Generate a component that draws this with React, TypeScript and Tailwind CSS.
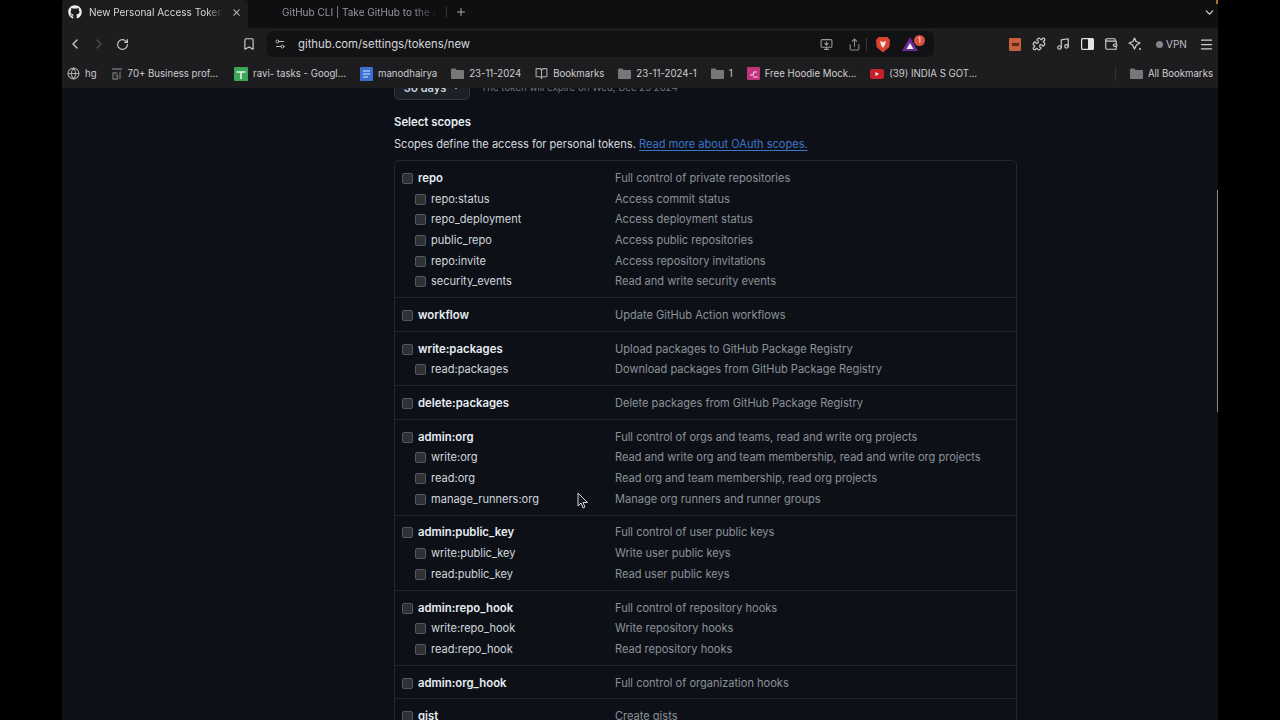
import { FaGithub } from 'react-icons/fa'
import {
  Bookmark,
  BookOpen,
  ChevronDown,
  ChevronLeft,
  ChevronRight,
  Globe,
  Menu,
  MonitorDown,
  Music,
  Plus,
  Puzzle,
  RotateCw,
  Settings2,
  Share,
  Wallet,
  X,
} from 'lucide-react'

type Scope = { name: string; desc: string }
type Group = { parent: Scope; children: Scope[] }

const groups: Group[] = [
  {
    parent: { name: 'repo', desc: 'Full control of private repositories' },
    children: [
      { name: 'repo:status', desc: 'Access commit status' },
      { name: 'repo_deployment', desc: 'Access deployment status' },
      { name: 'public_repo', desc: 'Access public repositories' },
      { name: 'repo:invite', desc: 'Access repository invitations' },
      { name: 'security_events', desc: 'Read and write security events' },
    ],
  },
  { parent: { name: 'workflow', desc: 'Update GitHub Action workflows' }, children: [] },
  {
    parent: { name: 'write:packages', desc: 'Upload packages to GitHub Package Registry' },
    children: [{ name: 'read:packages', desc: 'Download packages from GitHub Package Registry' }],
  },
  { parent: { name: 'delete:packages', desc: 'Delete packages from GitHub Package Registry' }, children: [] },
  {
    parent: { name: 'admin:org', desc: 'Full control of orgs and teams, read and write org projects' },
    children: [
      { name: 'write:org', desc: 'Read and write org and team membership, read and write org projects' },
      { name: 'read:org', desc: 'Read org and team membership, read org projects' },
      { name: 'manage_runners:org', desc: 'Manage org runners and runner groups' },
    ],
  },
  {
    parent: { name: 'admin:public_key', desc: 'Full control of user public keys' },
    children: [
      { name: 'write:public_key', desc: 'Write user public keys' },
      { name: 'read:public_key', desc: 'Read user public keys' },
    ],
  },
  {
    parent: { name: 'admin:repo_hook', desc: 'Full control of repository hooks' },
    children: [
      { name: 'write:repo_hook', desc: 'Write repository hooks' },
      { name: 'read:repo_hook', desc: 'Read repository hooks' },
    ],
  },
  { parent: { name: 'admin:org_hook', desc: 'Full control of organization hooks' }, children: [] },
  { parent: { name: 'gist', desc: 'Create gists' }, children: [] },
]

function Folder() {
  return (
    <svg width="13" height="11" viewBox="0 0 13 11" className="shrink-0">
      <path d="M0 1.5A1 1 0 0 1 1 .5h3.5l1 1.5H12a1 1 0 0 1 1 1v7a1 1 0 0 1-1 1H1a1 1 0 0 1-1-1z" fill="#77777a" />
    </svg>
  )
}

function Sheets() {
  return (
    <svg width="14" height="14" viewBox="0 0 14 14" className="shrink-0">
      <rect width="14" height="14" rx="1" fill="#3aa757" />
      <path d="M2.5 5h9M7 5v7" stroke="#e6f4ea" strokeWidth="1.6" />
    </svg>
  )
}

function Docs() {
  return (
    <svg width="13" height="14" viewBox="0 0 13 14" className="shrink-0">
      <rect width="13" height="14" rx="1" fill="#3b6fd4" />
      <path d="M3 4h7M3 7h7M3 10h5" stroke="#dfe8fa" strokeWidth="1.2" />
    </svg>
  )
}

function Hoodie() {
  return (
    <svg width="13" height="13" viewBox="0 0 13 13" className="shrink-0">
      <rect width="13" height="13" rx="1" fill="#c2337c" />
      <path d="M3 8h3l1-3h3M6 10h5" stroke="#f7d5e6" strokeWidth="1.2" fill="none" />
    </svg>
  )
}

function Youtube() {
  return (
    <svg width="14" height="10" viewBox="0 0 14 10" className="shrink-0">
      <rect width="14" height="10" rx="2" fill="#c8202a" />
      <path d="M5.5 3v4L9 5z" fill="#f3f3f3" />
    </svg>
  )
}

function GtLogo() {
  return (
    <svg width="12" height="12" viewBox="0 0 12 12" className="shrink-0" fill="none" stroke="#6f6f72" strokeWidth="1.3">
      <path d="M1 1h10M6.500 5H2v6h4.500V7.500H4.500M9 3.500V11" />
    </svg>
  )
}

function BraveShield() {
  return (
    <svg width="16" height="17" viewBox="0 0 16 17">
      <path d="M3.500 1h9L15 4l-.6 7L8 16.500 1.600 11 1 4z" fill="#d8442f" />
      <path d="M5 5l3 1 3-1-1 4-2 3-2-3z" fill="#f5e6df" />
    </svg>
  )
}

function Rewards() {
  return (
    <div className="relative w-[18px] h-[18px]">
      <svg width="16" height="14" viewBox="0 0 16 14" className="mt-[4px]">
        <path d="M8 0l8 14H0z" fill="#6b2a94" />
        <path d="M8 6l3.500 6h-7z" fill="#f2f2f2" />
      </svg>
      <div className="absolute top-[-2px] right-[-5px] w-[11px] h-[11px] rounded-full bg-[#d9503f] text-[7px] leading-[11px] text-center text-white">
        1
      </div>
    </div>
  )
}

function SidePanel() {
  return (
    <svg width="13" height="12" viewBox="0 0 13 12" className="ml-[11px] shrink-0">
      <rect x=".6" y=".6" width="11.800" height="10.800" rx="1" fill="none" stroke="#e4e4e6" strokeWidth="1.2" />
      <rect x="7" y="1" width="5" height="10" fill="#e4e4e6" />
    </svg>
  )
}

function StarDot() {
  return (
    <svg width="14" height="14" viewBox="0 0 14 14" className="ml-[10px] shrink-0" fill="none" stroke="#cfcfd2" strokeWidth="1.200">
      <path d="M6.500 1l1.500 3.500L12 6 8.500 8 6.500 12 4.500 8 1 6l4-1.500z" strokeLinejoin="round" />
      <circle cx="12" cy="12" r="1" fill="#cfcfd2" stroke="none" />
    </svg>
  )
}

function Bm({ icon, label }: { icon: React.ReactNode; label: string }) {
  return (
    <div className="flex items-center gap-[5px] shrink-0">
      {icon}
      <span className="whitespace-nowrap">{label}</span>
    </div>
  )
}

function Checkbox() {
  return <div className="mt-[2px] w-[11px] h-[11px] shrink-0 rounded-[2px] border border-[#54585f] bg-[#2d3035]" />
}

function ScopeRow({ scope, child }: { scope: Scope; child?: boolean }) {
  return (
    <div className="flex items-center h-[20.7px]">
      <div className={child ? 'w-[208px] pl-[20px] flex items-center gap-[5px]' : 'w-[208px] pl-[7px] flex items-center gap-[5px]'}>
        <Checkbox />
        <span className={child ? 'pt-px text-[#d2d7dd]' : 'pt-px text-[11.350px] font-semibold text-[#e6edf3]'}>{scope.name}</span>
      </div>
      <span className="ml-[12px] pt-px text-[#8b9299] whitespace-nowrap">{scope.desc}</span>
    </div>
  )
}

export default function App() {
  return (
    <div className="h-[720px] w-[1280px] overflow-hidden bg-black flex justify-center font-['Inter',sans-serif]">
      <div className="relative w-[1156px] h-full flex flex-col">
        {/* Tab strip */}
        <div className="h-[28px] shrink-0 bg-[#0f0f11] flex items-center text-[10px]">
          <div className="w-[186px] h-full bg-[#1c1c1e] flex items-center pl-[6px] pr-[6px] pb-[4px] rounded-t-[4px]">
            <FaGithub className="text-[#eeeeee] text-[14px] shrink-0" />
            <span className="ml-[7px] text-[#d6d6d8] whitespace-nowrap overflow-hidden w-[135px] [mask-image:linear-gradient(to_right,black_88%,transparent)]">
              New Personal Access Token | GitHub
            </span>
            <X size={11} strokeWidth={2.2} className="ml-[8px] text-[#d0d0d0] shrink-0" />
          </div>
          <div className="flex items-center flex-1 pb-[4px]">
            <span className="ml-[34px] text-[#97979b] whitespace-nowrap overflow-hidden w-[155px] [mask-image:linear-gradient(to_right,black_85%,transparent)]">
              GitHub CLI | Take GitHub to the command line
            </span>
            <div className="ml-[9px] w-px h-[12px] bg-[#333336]" />
            <Plus size={12} className="ml-[8px] text-[#a8a8ac]" />
            <ChevronDown size={13} className="ml-auto mr-[2px] text-[#e0e0e0]" />
          </div>
        </div>

        {/* Nav bar */}
        <div className="h-[32px] shrink-0 bg-[#1d1d1f] flex items-center text-[#cfcfd2]">
          <ChevronLeft size={16} className="ml-[5px] text-[#c8c8cb]" />
          <ChevronRight size={16} className="ml-[8px] text-[#4d4d50]" />
          <RotateCw size={13} className="ml-[9px]" />
          <Bookmark size={14} className="ml-[113px]" />
          <div className="ml-[11px] w-[667px] h-[26px] bg-[#121214] rounded-[6px] flex items-center">
            <Settings2 size={12} className="ml-[7px] text-[#b8b8bb]" />
            <span className="ml-[12px] text-[11.300px] text-[#d8d8da]">github.com/settings/tokens/new</span>
            <MonitorDown size={13} className="ml-auto text-[#9a9a9d]" />
            <Share size={13} className="ml-[15px] text-[#8e8e91]" />
            <div className="ml-[5px] w-px h-[13px] bg-[#39393c]" />
            <div className="ml-[8px]">
              <BraveShield />
            </div>
            <div className="ml-[11px] mr-[14px]">
              <Rewards />
            </div>
          </div>
          <div className="ml-[75px] w-[12px] h-[13px] rounded-[1px] bg-[#c4603a] flex items-center justify-center">
            <div className="w-[7px] h-[3px] bg-[#5d2a18]" />
          </div>
          <Puzzle size={14} className="ml-[11px]" />
          <Music size={14} className="ml-[10px]" />
          <SidePanel />
          <Wallet size={14} className="ml-[10px]" />
          <StarDot />
          <div className="ml-[14px] flex items-center gap-[3px] text-[10px] text-[#bdbdc0]">
            <div className="w-[7px] h-[7px] rounded-full bg-[#85858a]" />
            VPN
          </div>
          <Menu size={15} className="ml-[12px]" />
        </div>

        {/* Bookmarks bar */}
        <div className="h-[28px] shrink-0 bg-[#1d1d1f] flex items-center pl-[5px] gap-[14px] text-[9.650px] text-[#cdcdd0] relative z-10">
          <Bm icon={<Globe size={13} className="text-[#a9a9ac]" />} label="hg" />
          <Bm icon={<GtLogo />} label="70+ Business prof..." />
          <div className="ml-[2px]">
            <Bm icon={<Sheets />} label="ravi- tasks - Googl..." />
          </div>
          <Bm icon={<Docs />} label="manodhairya" />
          <Bm icon={<Folder />} label="23-11-2024" />
          <Bm icon={<BookOpen size={13} className="text-[#aaaaad]" />} label="Bookmarks" />
          <Bm icon={<Folder />} label="23-11-2024-1" />
          <Bm icon={<Folder />} label="1" />
          <Bm icon={<Hoodie />} label="Free Hoodie Mock..." />
          <Bm icon={<Youtube />} label="(39) INDIA S GOT..." />
          <div className="ml-auto w-px h-[14px] bg-[#333336]" />
          <div className="mr-[5px]">
            <Bm icon={<Folder />} label="All Bookmarks" />
          </div>
        </div>

        {/* Page */}
        <div className="flex-1 min-h-0 overflow-hidden bg-[#0d1117] pl-[332px] text-[11.050px] leading-[20px]">
          <div className="w-[623px] mt-[-16px]">
            <div className="flex items-center">
              <div className="w-[76px] h-[28px] pt-[4px] rounded-[5px] border border-[#30363d] bg-[#1c2128] flex items-center justify-center gap-[6px] font-semibold text-[#c9d1d9]">
                30 days
                <ChevronDown size={8} />
              </div>
              <span className="ml-[11px] pt-[4px] text-[9.700px] text-[#6d747d]">The token will expire on Wed, Dec 25 2024</span>
            </div>
            <div className="mt-[12px] text-[11.350px] font-semibold text-[#e6edf3]">Select scopes</div>
            <div className="mt-[2px] text-[#d5dae0]">
              Scopes define the access for personal tokens.{' '}
              <span className="text-[#3f74c9] underline underline-offset-2">Read more about OAuth scopes.</span>
            </div>
            <div className="mt-[6px] border border-[#22272e] rounded-[5px]">
              {groups.map((group, i) => (
                <div key={group.parent.name} className={i === 0 ? 'py-[6px]' : 'py-[6px] border-t border-[#22272e]'}>
                  <ScopeRow scope={group.parent} />
                  {group.children.map((c) => (
                    <ScopeRow key={c.name} scope={c} child />
                  ))}
                </div>
              ))}
            </div>
          </div>
        </div>

        {/* Scrollbar, cursor */}
        <div className="absolute left-[1155px] top-[190px] w-px h-[222px] bg-[#8a8a8d]" />
        <div className="absolute left-[1154px] top-0 w-[2px] h-[4px] bg-[#b0702c]" />
        <svg width="12" height="17" viewBox="0 0 12 17" className="absolute left-[515px] top-[492px]">
          <path d="M1 1v13l3-3 2 5 2-1-2-4.500h4.500z" fill="#15181d" stroke="#d8d8da" strokeWidth="1" />
        </svg>
      </div>
    </div>
  )
}
